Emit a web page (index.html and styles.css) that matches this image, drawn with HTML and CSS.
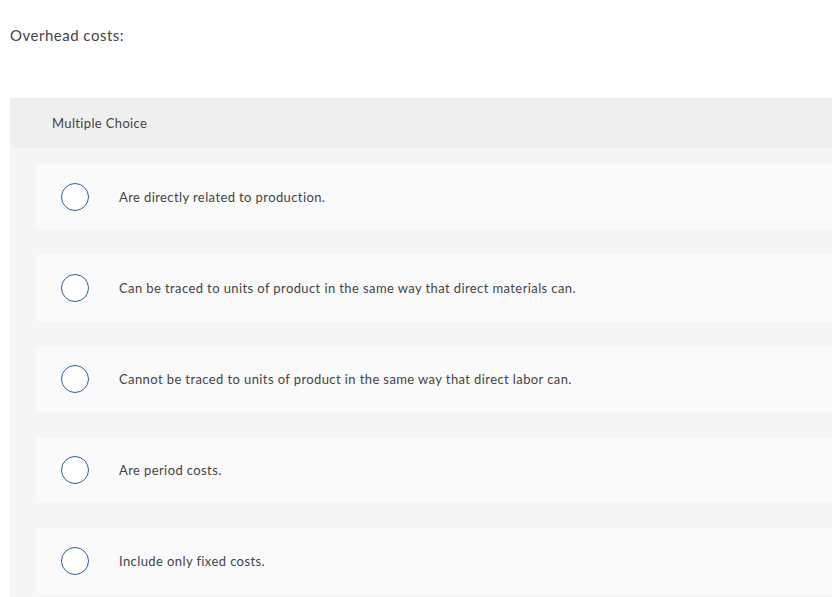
FILE: index.html
```html
<!DOCTYPE html>
<html>
<head>
<meta charset="utf-8">
<link rel="stylesheet" href="styles.css">
</head>
<body>
<p class="question">Overhead costs:</p>
<section class="panel">
  <div class="panel-head">Multiple Choice</div>
  <div class="options">
    <label class="option"><span class="radio"></span><span class="opt-text">Are directly related to production.</span></label>
    <label class="option"><span class="radio"></span><span class="opt-text">Can be traced to units of product in the same way that direct materials can.</span></label>
    <label class="option"><span class="radio"></span><span class="opt-text">Cannot be traced to units of product in the same way that direct labor can.</span></label>
    <label class="option"><span class="radio"></span><span class="opt-text">Are period costs.</span></label>
    <label class="option"><span class="radio"></span><span class="opt-text">Include only fixed costs.</span></label>
  </div>
</section>
</body>
</html>
```
FILE: styles.css
```css
html, body {
  margin: 0;
  padding: 0;
  background: #ffffff;
  overflow: hidden;
}
body {
  font-family: Lato, "Open Sans", "Liberation Sans", sans-serif;
  color: #444444;
}
.question {
  margin: 0;
  padding: 25px 0 0 10px;
  height: 98px;
  box-sizing: border-box;
  font-size: 15px;
  line-height: 20px;
  letter-spacing: 0.5px;
}
.panel {
  margin-left: 10px;
  background: #f5f5f5;
  height: 499px;
}
.panel-head {
  background: #efefef;
  height: 50px;
  box-sizing: border-box;
  padding-left: 42px;
  font-size: 13px;
  line-height: 50px;
  letter-spacing: 0.35px;
}
.options {
  display: flex;
  flex-direction: column;
  gap: 25px;
  padding: 16px 0 0 26px;
}
.option {
  display: flex;
  align-items: center;
  height: 66px;
  background: #fafafa;
  padding-left: 25px;
  font-size: 13px;
  letter-spacing: 0.4px;
}
.radio {
  width: 26px;
  height: 26px;
  border: 1px solid #2c5f98;
  border-radius: 50%;
  background: #ffffff;
  flex: none;
}
.opt-text {
  margin-left: 30px;
}
```
